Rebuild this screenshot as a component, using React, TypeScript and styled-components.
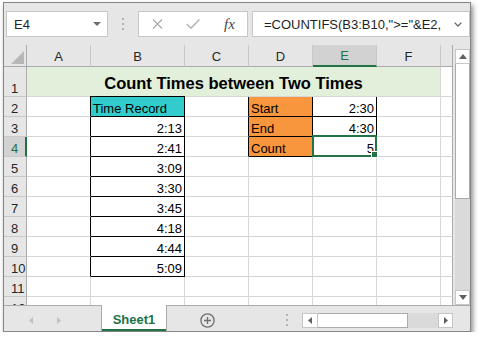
import React from "react";
import styled, { createGlobalStyle } from "styled-components";

const GREEN = "#217346";
const GRID = "#d6d6d6";
const HEAD = "#e6e6e6";
const HEAD_SEL = "#d2d2d2";
const HEAD_LINE = "#ababab";
const ORANGE = "#f7963c";
const CYAN = "#33cccc";
const TITLE_BG = "#e2efda";

const GlobalStyle = createGlobalStyle`
  *, *::before, *::after { box-sizing: border-box; }
  html, body { margin: 0; padding: 0; background: #ffffff; }
  body { font-family: "Liberation Sans", Arial, sans-serif; }
`;

const Page = styled.div`
  padding: 2px 0 0 3px;
`;

const Window = styled.div`
  width: 468px;
  height: 330px;
  border: 1px solid #868686;
  background: ${HEAD};
  box-shadow: 2px 3px 5px rgba(0, 0, 0, 0.45);
  display: flex;
  flex-direction: column;
  overflow: hidden;
`;

const FormulaBar = styled.div`
  height: 42px;
  flex: none;
  display: flex;
  align-items: flex-start;
  padding: 8px 0 0 2px;
`;

const Box = styled.div`
  height: 26px;
  flex: none;
  border: 1px solid #c6c6c6;
  background: #ffffff;
  display: flex;
  align-items: center;
`;

const NameBox = styled(Box)`
  width: 102px;
  padding: 0 6px 0 7px;
  justify-content: space-between;
  font-size: 13px;
  color: #262626;
`;

const Grip = styled.div<{ $ml: number }>`
  margin-left: ${(p) => p.$ml}px;
  height: 26px;
  display: flex;
  flex-direction: column;
  justify-content: center;
  gap: 3px;
  flex: none;
`;

const GripDot = styled.span`
  display: block;
  width: 2px;
  height: 2px;
  background: #b3b3b3;
`;

const IconBox = styled(Box)`
  margin-left: 14px;
  width: 110px;
  padding-left: 13px;
`;

const IconSlot = styled.span<{ $ml: number }>`
  margin-left: ${(p) => p.$ml}px;
  display: flex;
  align-items: center;
`;

const FxText = styled.span`
  margin-left: 24px;
  font-family: "Liberation Serif", "Times New Roman", serif;
  font-style: italic;
  font-size: 15px;
  color: #444444;
`;

const FormulaInput = styled(Box)`
  margin-left: 4px;
  width: 218px;
  padding: 0 7px 0 11px;
  justify-content: space-between;
  font-size: 13px;
  color: #1f1f1f;
  white-space: nowrap;
`;

const Middle = styled.div`
  display: flex;
  height: 260px;
  flex: none;
`;

const Sheet = styled.div`
  width: 449px;
  height: 260px;
  flex: none;
  overflow: hidden;
  display: grid;
  grid-template-columns: 23px 64px 94px 64px 64px 64px 64px 12px;
  grid-template-rows: 22px 30px repeat(11, 20px);
  background: #ffffff;
`;

const Corner = styled.div`
  background: ${HEAD};
  border-right: 1px solid ${HEAD_LINE};
  border-bottom: 1px solid ${HEAD_LINE};
  display: flex;
  align-items: flex-end;
  justify-content: flex-end;
  padding: 0 2px 2px 0;
`;

const ColHeader = styled.div<{ $sel?: boolean; $last?: boolean }>`
  background: ${(p) => (p.$sel ? HEAD_SEL : HEAD)};
  border-right: 1px solid ${(p) => (p.$last ? HEAD_LINE : "#c8c8c8")};
  border-bottom: ${(p) => (p.$sel ? `2px solid ${GREEN}` : `1px solid ${HEAD_LINE}`)};
  display: flex;
  align-items: center;
  justify-content: center;
  padding-top: 1px;
  font-size: 13px;
  color: ${(p) => (p.$sel ? GREEN : "#262626")};
`;

const RowHeader = styled.div<{ $sel?: boolean }>`
  background: ${(p) => (p.$sel ? HEAD_SEL : HEAD)};
  border-right: ${(p) => (p.$sel ? `2px solid ${GREEN}` : `1px solid ${HEAD_LINE}`)};
  border-bottom: 1px solid #c8c8c8;
  display: flex;
  align-items: flex-end;
  padding-left: 7px;
  font-size: 13px;
  line-height: 15px;
  color: ${(p) => (p.$sel ? GREEN : "#262626")};
`;

const Cell = styled.div<{ $bg?: string; $align?: "left" | "right"; $br: string; $bb: string }>`
  position: relative;
  background: ${(p) => p.$bg ?? "#ffffff"};
  border-right: 1px solid ${(p) => p.$br};
  border-bottom: 1px solid ${(p) => p.$bb};
  display: flex;
  align-items: flex-end;
  justify-content: ${(p) => (p.$align === "left" ? "flex-start" : "flex-end")};
  padding: 0 2px;
  font-size: 13px;
  line-height: 15px;
  color: #000000;
  white-space: nowrap;
`;

const TitleCell = styled.div`
  grid-column: span 6;
  background: linear-gradient(to right, ${GRID} 0 63px, #000 63px 158px, ${GRID} 158px) left bottom / 100% 1px no-repeat,
    ${TITLE_BG};
  border-right: 1px solid ${GRID};
  display: flex;
  align-items: center;
  justify-content: center;
  padding-top: 2px;
  font-size: 16.5px;
  font-weight: bold;
  color: #000000;
  white-space: nowrap;
`;

const Selection = styled.span`
  position: absolute;
  left: -1px;
  top: -2px;
  right: -1px;
  bottom: -1px;
  border: 2px solid ${GREEN};
  pointer-events: none;
  z-index: 2;
`;

const Handle = styled.span`
  position: absolute;
  right: -2px;
  bottom: -2px;
  width: 7px;
  height: 7px;
  background: ${GREEN};
  border: 1px solid #ffffff;
  z-index: 3;
`;

const VScroll = styled.div`
  width: 17px;
  flex: none;
  padding: 4px 0 0 2px;
  display: flex;
  flex-direction: column;
  background: ${HEAD};
`;

const ScrollBtn = styled.div<{ $w?: number }>`
  width: ${(p) => p.$w ?? 15}px;
  height: 15px;
  flex: none;
  background: #ffffff;
  border: 1px solid #c6c6c6;
  display: flex;
  align-items: center;
  justify-content: center;
`;

const VThumb = styled.div`
  width: 15px;
  height: 135px;
  flex: none;
  background: #ffffff;
  border: 1px solid #ababab;
  border-top: none;
`;

const Track = styled.div`
  flex: 1;
  background: #dadada;
`;

const TabBar = styled.div`
  height: 26px;
  flex: none;
  display: flex;
`;

const NavArea = styled.div`
  width: 98px;
  flex: none;
  border-top: 1px solid ${HEAD_LINE};
  border-right: 1px solid ${HEAD_LINE};
  display: flex;
  align-items: center;
  gap: 24px;
  padding: 3px 0 0 25px;
`;

const SheetTab = styled.div`
  width: 64px;
  flex: none;
  background: #ffffff;
  border-bottom: 2px solid ${GREEN};
  display: flex;
  align-items: center;
  justify-content: center;
  padding-top: 4px;
  font-size: 13px;
  font-weight: bold;
  color: ${GREEN};
`;

const TabRest = styled.div`
  flex: 1;
  border-top: 1px solid ${HEAD_LINE};
  border-left: 1px solid ${HEAD_LINE};
  display: flex;
  align-items: center;
  padding-top: 3px;
`;

const PlusSlot = styled.span`
  margin-left: 33px;
  display: flex;
`;

const HScroll = styled.div`
  margin-left: 14px;
  width: 151px;
  height: 15px;
  flex: none;
  display: flex;
`;

const HThumb = styled.div`
  width: 90px;
  flex: none;
  background: #ffffff;
  border: 1px solid #ababab;
  border-left: none;
`;

const times = ["2:13", "2:41", "3:09", "3:30", "3:45", "4:18", "4:44", "5:09"];

type CellData = { text?: string; bg?: string; align?: "left" | "right"; sel?: boolean };

const bordered = (r: number, c: number) =>
  (c === 1 && r >= 2 && r <= 10) || ((c === 3 || c === 4) && r >= 2 && r <= 4);

function cellAt(r: number, c: number): CellData {
  if (c === 1) {
    if (r === 2) return { text: "Time Record", bg: CYAN, align: "left" };
    if (r >= 3 && r <= 10) return { text: times[r - 3] };
  }
  if (c === 3) {
    if (r === 2) return { text: "Start", bg: ORANGE, align: "left" };
    if (r === 3) return { text: "End", bg: ORANGE, align: "left" };
    if (r === 4) return { text: "Count", bg: ORANGE, align: "left" };
  }
  if (c === 4) {
    if (r === 2) return { text: "2:30" };
    if (r === 3) return { text: "4:30" };
    if (r === 4) return { text: "5", sel: true };
  }
  return {};
}

const COLS = ["A", "B", "C", "D", "E", "F", ""];

const Caret = () => (
  <svg width="8" height="4" viewBox="0 0 8 4">
    <polygon points="0,0 8,0 4,4" fill="#6d6d6d" />
  </svg>
);

const Tri = ({ dir, color }: { dir: "up" | "down" | "left" | "right"; color: string }) => {
  const pts =
    dir === "up"
      ? "0,5 8,5 4,0"
      : dir === "down"
      ? "0,0 8,0 4,5"
      : dir === "left"
      ? "4,0 4,7 0,3.5"
      : "0,0 0,7 4,3.5";
  const vert = dir === "up" || dir === "down";
  return (
    <svg width={vert ? 8 : 4} height={vert ? 5 : 7} viewBox={vert ? "0 0 8 5" : "0 0 4 7"}>
      <polygon points={pts} fill={color} />
    </svg>
  );
};

export default function App() {
  const rows: React.ReactNode[] = [];
  for (let r = 2; r <= 12; r++) {
    rows.push(
      <RowHeader key={`h${r}`} $sel={r === 4}>
        {r}
      </RowHeader>
    );
    for (let c = 0; c < 7; c++) {
      const d = cellAt(r, c);
      const br = c === 6 ? HEAD_LINE : bordered(r, c) || bordered(r, c + 1) ? "#000" : GRID;
      const bb = bordered(r, c) || bordered(r + 1, c) ? "#000" : GRID;
      rows.push(
        <Cell key={`c${r}-${c}`} $bg={d.bg} $align={d.align} $br={br} $bb={bb}>
          {d.text}
          {d.sel && (
            <>
              <Selection />
              <Handle />
            </>
          )}
        </Cell>
      );
    }
  }

  return (
    <>
      <GlobalStyle />
      <Page>
        <Window>
          <FormulaBar>
            <NameBox>
              <span>E4</span>
              <Caret />
            </NameBox>
            <Grip $ml={14}>
              <GripDot />
              <GripDot />
              <GripDot />
            </Grip>
            <IconBox>
              <IconSlot $ml={0}>
                <svg width="11" height="10" viewBox="0 0 11 10">
                  <path d="M1 0.5 L10 9.5 M10 0.5 L1 9.5" stroke="#a8a8a8" strokeWidth="1.2" fill="none" />
                </svg>
              </IconSlot>
              <IconSlot $ml={23}>
                <svg width="14" height="10" viewBox="0 0 14 10">
                  <path d="M0.7 5 L5 9.2 L13.4 0.6" fill="none" stroke="#b0b0b0" strokeWidth="1.4" />
                </svg>
              </IconSlot>
              <FxText>fx</FxText>
            </IconBox>
            <FormulaInput>
              <span>=COUNTIFS(B3:B10,"&gt;="&amp;E2,</span>
              <svg width="8" height="5" viewBox="0 0 8 5">
                <path d="M0.6 0.6 L4 4 L7.4 0.6" fill="none" stroke="#666" strokeWidth="1.3" />
              </svg>
            </FormulaInput>
          </FormulaBar>
          <Middle>
            <Sheet>
              <Corner>
                <svg width="13" height="13" viewBox="0 0 13 13">
                  <polygon points="13,0 13,13 0,13" fill="#b7b7b7" />
                </svg>
              </Corner>
              {COLS.map((l, i) => (
                <ColHeader key={`ch${i}`} $sel={l === "E"} $last={i === 6}>
                  {l}
                </ColHeader>
              ))}
              <RowHeader>1</RowHeader>
              <TitleCell>Count Times between Two Times</TitleCell>
              <Cell $br={HEAD_LINE} $bb={GRID} />
              {rows}
            </Sheet>
            <VScroll>
              <ScrollBtn>
                <Tri dir="up" color="#606060" />
              </ScrollBtn>
              <VThumb />
              <Track />
              <ScrollBtn>
                <Tri dir="down" color="#606060" />
              </ScrollBtn>
            </VScroll>
          </Middle>
          <TabBar>
            <NavArea>
              <Tri dir="left" color="#c2c2c2" />
              <Tri dir="right" color="#c2c2c2" />
            </NavArea>
            <SheetTab>Sheet1</SheetTab>
            <TabRest>
              <PlusSlot>
                <svg width="15" height="15" viewBox="0 0 15 15">
                  <circle cx="7.5" cy="7.5" r="6.6" fill="none" stroke="#6e6e6e" strokeWidth="1.3" />
                  <path d="M7.5 4 V11 M4 7.5 H11" stroke="#6e6e6e" strokeWidth="1.3" />
                </svg>
              </PlusSlot>
              <Grip $ml={71}>
                <GripDot />
                <GripDot />
                <GripDot />
              </Grip>
              <HScroll>
                <ScrollBtn $w={16}>
                  <Tri dir="left" color="#606060" />
                </ScrollBtn>
                <HThumb />
                <Track />
                <ScrollBtn>
                  <Tri dir="right" color="#606060" />
                </ScrollBtn>
              </HScroll>
            </TabRest>
          </TabBar>
        </Window>
      </Page>
    </>
  );
}
